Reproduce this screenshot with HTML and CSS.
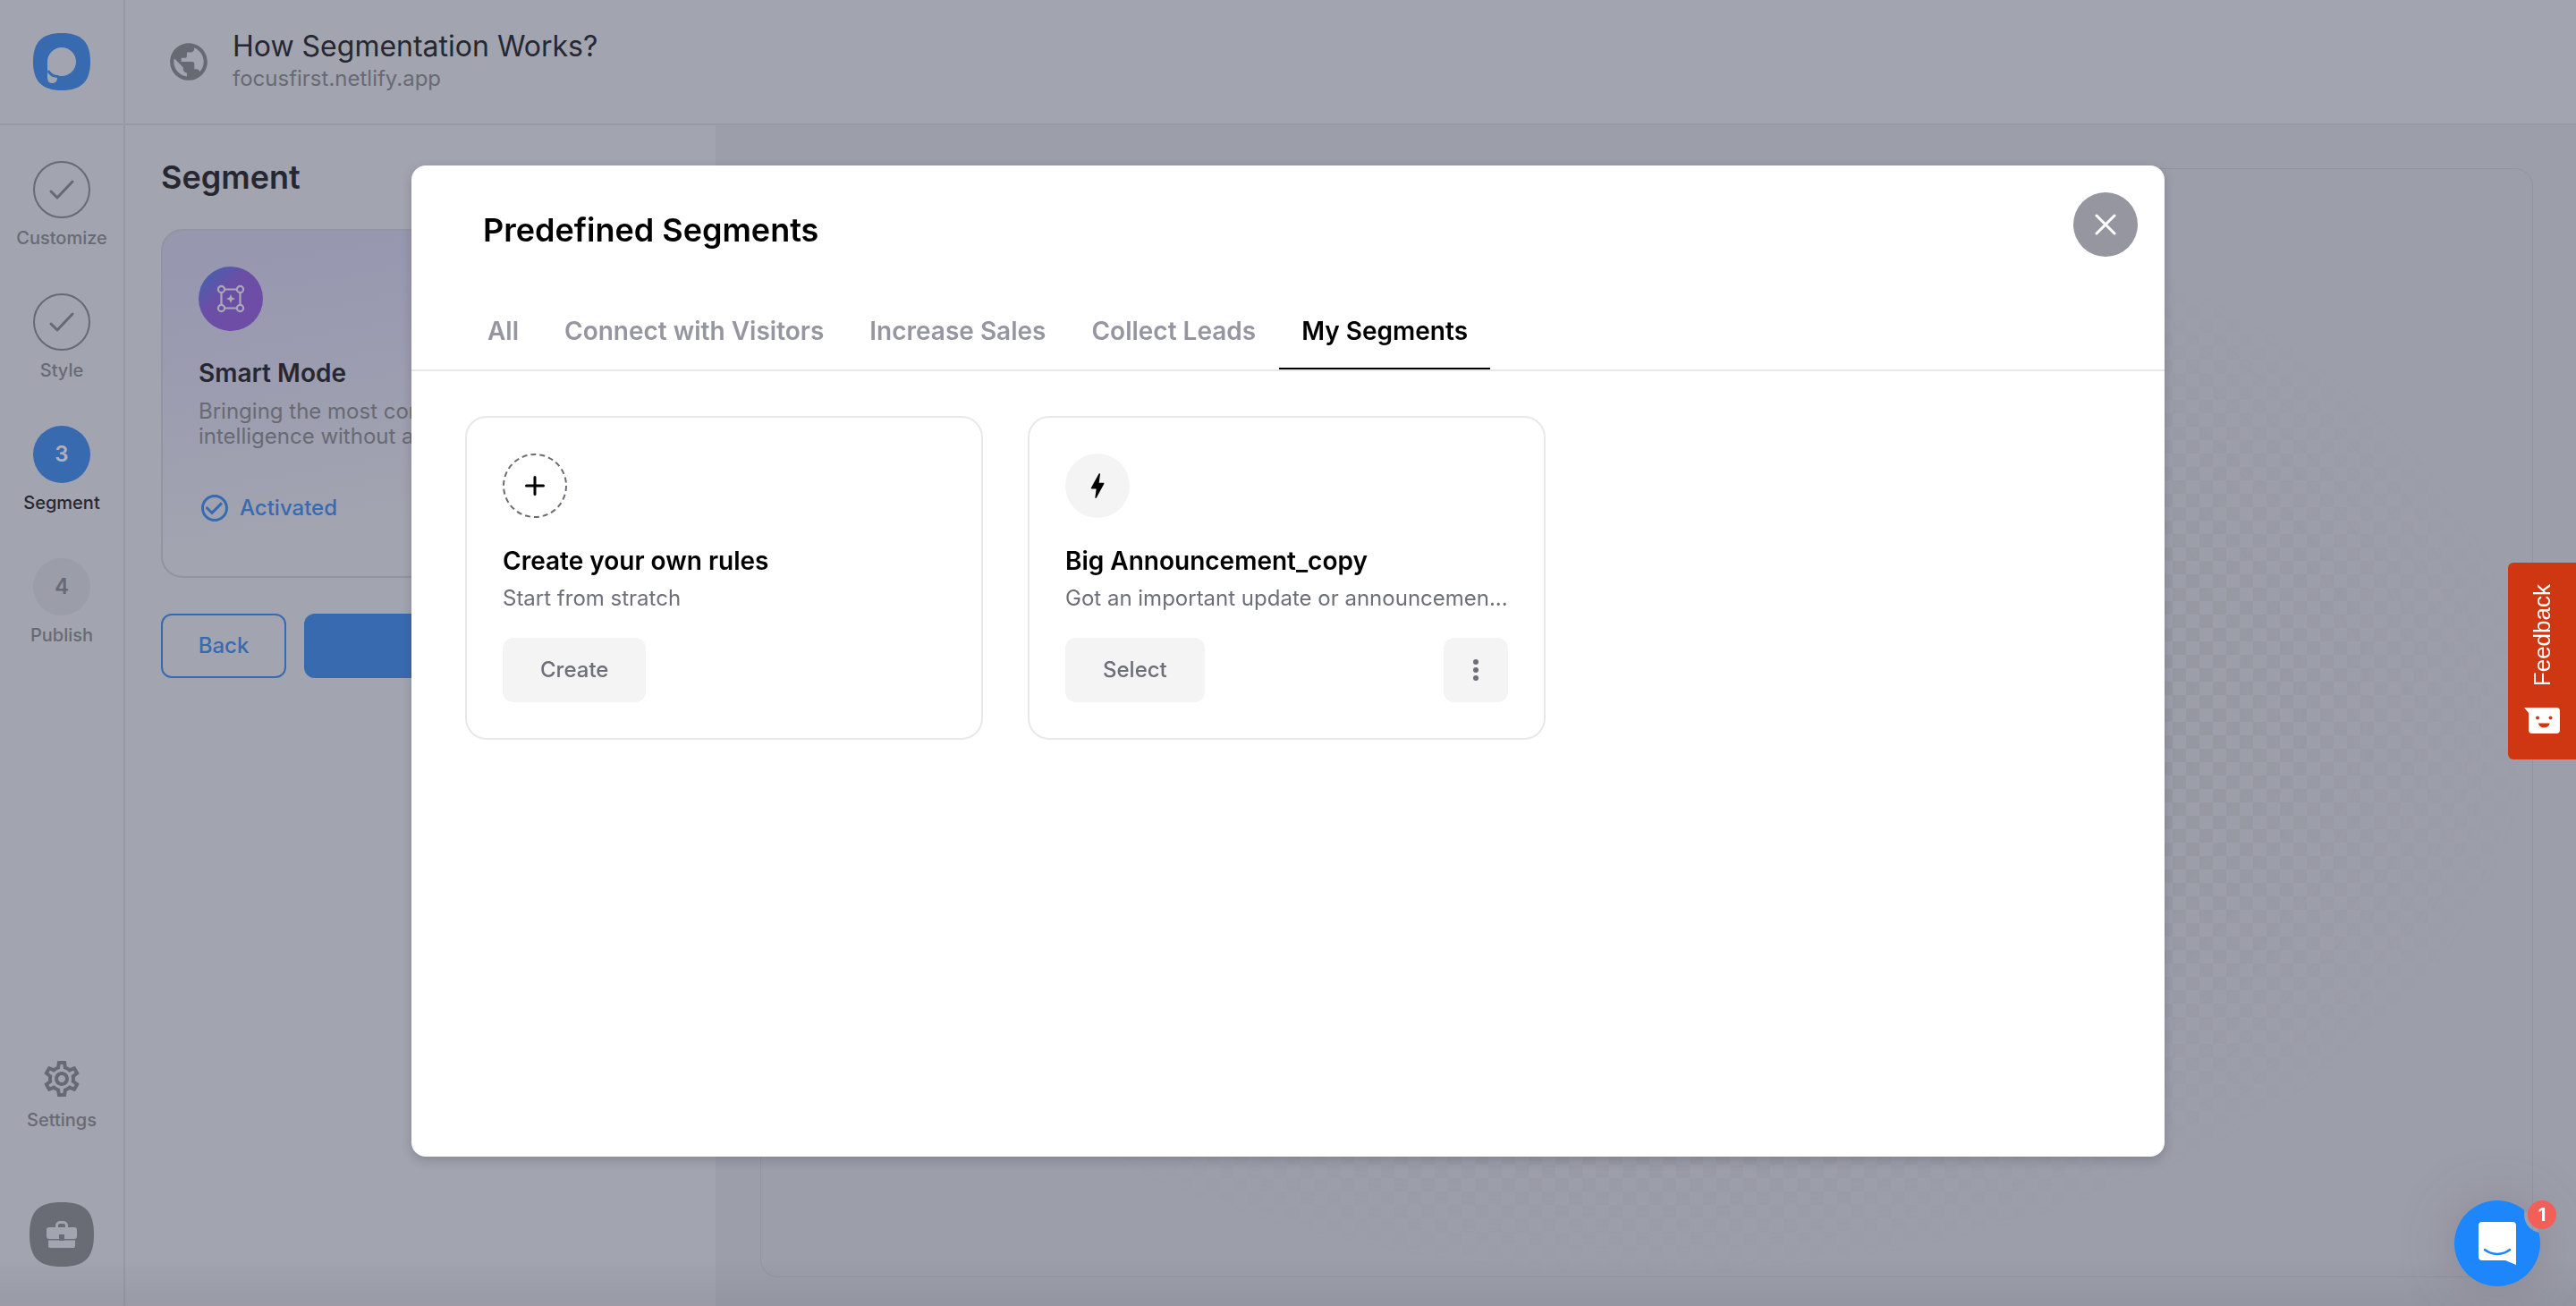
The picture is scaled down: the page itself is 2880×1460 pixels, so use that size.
FILE: index.html
```html
<!DOCTYPE html>
<html lang="en">
<head>
<meta charset="utf-8">
<meta name="viewport" content="width=device-width, initial-scale=1">
<title>Predefined Segments</title>
<link rel="stylesheet" href="styles.css">
</head>
<body>
<div class="app">
  <aside class="sidebar">
    <a class="logo" href="#" aria-label="Home">
      <svg width="64" height="64" viewBox="0 0 64 64" aria-hidden="true">
        <path class="logo-shape" d="M32 0C54 0 64 10 64 32S54 64 32 64 0 54 0 32 10 0 32 0z"/>
        <path class="logo-hole" d="M16 32a16 16 0 1 1 16 16c-2 0-4 0-5.500-1 1 3 1 9-5 9-4 0-5.500-3-5.500-6z"/>
        <path class="logo-stroke" d="M17.500 43c2 3.500 5 5.500 10 5.500"/>
      </svg>
    </a>
    <nav class="rail" aria-label="Steps">
      <ol class="steps">
        <li><a class="step" href="#"><span class="step-mark done"><svg width="60" height="60" viewBox="2 2 60 60" aria-hidden="true"><path d="M20 34l7 7 17-18"/></svg></span>Customize</a></li>
        <li><a class="step" href="#"><span class="step-mark done"><svg width="60" height="60" viewBox="2 2 60 60" aria-hidden="true"><path d="M20 34l7 7 17-18"/></svg></span>Style</a></li>
        <li><a class="step active" href="#" aria-current="step"><span class="step-mark current">3</span>Segment</a></li>
        <li><a class="step" href="#"><span class="step-mark next">4</span>Publish</a></li>
      </ol>
      <div class="rail-end">
        <a class="step" href="#">
          <svg width="48" height="48" viewBox="0 0 24 24" fill="currentColor" aria-hidden="true"><path d="M19.43 12.98c.04-.32.07-.64.07-.98 0-.34-.03-.66-.07-.98l2.110-1.650c.19-.15.24-.42.12-.64l-2-3.460c-.09-.16-.26-.25-.44-.25-.06 0-.12.01-.17.03l-2.490 1c-.52-.4-1.080-.73-1.690-.98l-.38-2.650C14.460 2.180 14.250 2 14 2h-4c-.25 0-.46.18-.49.42l-.38 2.650c-.61.25-1.170.59-1.690.98l-2.490-1c-.06-.02-.12-.03-.18-.03-.17 0-.34.09-.43.25l-2 3.460c-.13.22-.07.49.12.64l2.110 1.650c-.04.32-.07.65-.07.98 0 .33.03.66.07.98l-2.110 1.650c-.19.15-.24.42-.12.64l2 3.460c.09.16.26.25.44.25.06 0 .12-.01.17-.03l2.490-1c.52.4 1.080.73 1.690.98l.38 2.650c.03.24.24.42.49.42h4c.25 0 .46-.18.49-.42l.38-2.650c.61-.25 1.170-.59 1.690-.98l2.490 1c.06.02.12.03.18.03.17 0 .34-.09.43-.25l2-3.460c.12-.22.07-.49-.12-.64l-2.110-1.650zm-1.980-1.710c.04.31.05.52.05.73 0 .21-.02.43-.05.73l-.14 1.130.89.7 1.080.84-.7 1.210-1.270-.51-1.040-.42-.9.68c-.43.32-.84.56-1.250.73l-1.060.43-.16 1.130-.2 1.350h-1.400l-.19-1.350-.16-1.130-1.060-.43c-.43-.18-.83-.41-1.230-.71l-.91-.7-1.060.43-1.270.51-.7-1.210 1.080-.84.89-.7-.14-1.130c-.03-.31-.05-.54-.05-.74s.02-.43.05-.73l.14-1.130-.89-.7-1.080-.84.7-1.210 1.270.51 1.040.42.9-.68c.43-.32.84-.56 1.250-.73l1.060-.43.16-1.130.2-1.350h1.390l.19 1.350.16 1.130 1.060.43c.43.18.83.41 1.230.71l.91.7 1.060-.43 1.270-.51.7 1.210-1.070.85-.89.7.14 1.130zM12 8c-2.210 0-4 1.790-4 4s1.790 4 4 4 4-1.790 4-4-1.790-4-4-4zm0 6c-1.100 0-2-.9-2-2s.9-2 2-2 2 .9 2 2-.9 2-2 2z"/></svg>
          Settings
        </a>
        <button class="workspace" type="button" aria-label="Workspace">
          <svg width="72" height="72" viewBox="0 0 72 72" aria-hidden="true">
            <path class="case-bg" d="M36 0C62 0 72 10 72 36S62 72 36 72 0 62 0 36 10 0 36 0z"/>
            <path class="case-handle" d="M30.500 29v-3a3.500 3.500 0 0 1 3.500-3.500h4a3.500 3.500 0 0 1 3.500 3.500v3"/>
            <path class="case-body" d="M22 28h28a3 3 0 0 1 3 3v7a3 3 0 0 1-3 3H22a3 3 0 0 1-3-3v-7a3 3 0 0 1 3-3zM21 42.500h30V49a2 2 0 0 1-2 2H23a2 2 0 0 1-2-2z"/>
            <path class="case-bg" d="M33 36h6v7h-6z"/>
          </svg>
        </button>
      </div>
    </nav>
  </aside>

  <header class="topbar">
    <svg width="50" height="50" viewBox="0 0 24 24" fill="currentColor" aria-hidden="true"><path d="M12 2C6.480 2 2 6.480 2 12s4.480 10 10 10 10-4.480 10-10S17.520 2 12 2zm-1 17.930c-3.950-.49-7-3.850-7-7.930 0-.62.08-1.210.21-1.790L9 15v1c0 1.100.9 2 2 2v1.930zm6.900-2.540c-.26-.81-1-1.390-1.900-1.390h-1v-3c0-.55-.45-1-1-1H8v-2h2c.55 0 1-.45 1-1V7h2c1.100 0 2-.9 2-2v-.41c2.930 1.190 5 4.060 5 7.410 0 2.080-.8 3.970-2.100 5.390z"/></svg>
    <div class="heading">
      <p class="campaign">How Segmentation Works?</p>
      <p class="domain">focusfirst.netlify.app</p>
    </div>
  </header>

  <main class="work">
    <section class="panel">
      <h1 class="panel-title">Segment</h1>
      <article class="smart">
        <svg class="smart-icon" width="72" height="72" viewBox="0 0 72 72" aria-hidden="true">
          <defs><linearGradient id="smart-fill" x1="0" y1="0" x2="1" y2="1"><stop offset="0" stop-color="#3d66b0"/><stop offset=".4" stop-color="#6a4ea6"/><stop offset="1" stop-color="#704ca6"/></linearGradient></defs>
          <circle cx="36" cy="36" r="36" fill="url(#smart-fill)"/>
          <g fill="none" stroke="#a9a9b6" stroke-width="2.200"><circle cx="25.500" cy="25.500" r="3.600"/><circle cx="46.500" cy="25.500" r="3.600"/><circle cx="25.500" cy="46.500" r="3.600"/><circle cx="46.500" cy="46.500" r="3.600"/><path d="M29 25.500h14M29 46.500h14M25.500 29v14M46.500 29v14"/></g>
          <path d="M36 31l1.500 3.500L41 36l-3.500 1.500L36 41l-1.500-3.500L31 36l3.500-1.500z" fill="#a9a9b6"/>
        </svg>
        <h2 class="smart-title">Smart Mode</h2>
        <p class="smart-text">Bringing the most conversions with artificial<br>intelligence without any effort</p>
        <p class="activated">
          <svg width="36" height="36" viewBox="0 0 24 24" fill="currentColor" aria-hidden="true"><path d="M16.590 7.580L10 14.170l-3.590-3.580L5 12l5 5 8-8zM12 2C6.480 2 2 6.480 2 12s4.480 10 10 10 10-4.480 10-10S17.520 2 12 2zm0 18c-4.420 0-8-3.580-8-8s3.580-8 8-8 8 3.580 8 8-3.580 8-8 8z"/></svg>
          Activated
        </p>
      </article>
      <div class="panel-actions">
        <button class="back" type="button">Back</button>
        <button class="continue" type="button" aria-label="Continue"></button>
      </div>
    </section>
    <section class="canvas" aria-label="Preview"><div class="frame"><div class="checker"></div></div></section>
  </main>
</div>

<div class="overlay">
  <div class="modal" role="dialog" aria-modal="true" aria-labelledby="modal-title">
    <header class="modal-head">
      <h2 class="modal-title" id="modal-title">Predefined Segments</h2>
      <button class="close" type="button" aria-label="Close"><svg width="24" height="24" viewBox="0 0 24 24" aria-hidden="true"><path d="M2 2l20 20M22 2L2 22"/></svg></button>
    </header>
    <div class="tabs" role="tablist">
      <button class="tab" type="button" role="tab">All</button>
      <button class="tab" type="button" role="tab">Connect with Visitors</button>
      <button class="tab" type="button" role="tab">Increase Sales</button>
      <button class="tab" type="button" role="tab">Collect Leads</button>
      <button class="tab selected" type="button" role="tab" aria-selected="true">My Segments</button>
    </div>
    <div class="cards">
      <article class="card">
        <svg width="72" height="72" viewBox="0 0 72 72" aria-hidden="true"><circle class="dashed" cx="36" cy="36" r="35"/><path class="plus" d="M36 26.500v19M26.500 36h19"/></svg>
        <h3 class="card-title">Create your own rules</h3>
        <p class="card-text">Start from stratch</p>
        <div class="card-actions"><button class="soft" type="button">Create</button></div>
      </article>
      <article class="card">
        <svg width="72" height="72" viewBox="0 0 72 72" aria-hidden="true"><circle cx="36" cy="36" r="36" fill="#f4f4f5"/><path d="M37.600 22.600c.5-.8 1.500-.5 1.400.4l-1.300 9.800h4.800c.8 0 1.100.5.8 1.200l-8.500 15.500c-.5.800-1.500.5-1.400-.4l1.300-9.600h-5c-.8 0-1.100-.6-.8-1.200z" fill="#000"/></svg>
        <h3 class="card-title">Big Announcement_copy</h3>
        <p class="card-text">Got an important update or announcemen...</p>
        <div class="card-actions">
          <button class="soft" type="button">Select</button>
          <button class="more" type="button" aria-label="More"><svg width="24" height="24" viewBox="0 0 24 24" fill="currentColor" aria-hidden="true"><circle cx="12" cy="3" r="3"/><circle cx="12" cy="12" r="3"/><circle cx="12" cy="21" r="3"/></svg></button>
        </div>
      </article>
    </div>
  </div>
</div>

<button class="feedback" type="button">
  <span class="feedback-text">Feedback</span>
  <svg width="40" height="30" viewBox="0 0 40 30" aria-hidden="true"><path d="M0 0h36a4 4 0 0 1 4 4v21a4 4 0 0 1-4 4H9a4 4 0 0 1-4-4V6z" fill="#fff"/><circle cx="15" cy="11.500" r="2"/><circle cx="29.500" cy="11.500" r="2"/><path d="M16 17.500h12.500c-.8 6.500-11.700 6.500-12.500 0z"/></svg>
</button>

<button class="chat" type="button" aria-label="Open chat, 1 unread">
  <svg width="96" height="96" viewBox="0 0 96 96" aria-hidden="true">
    <defs><mask id="notch"><path d="M0 0h96v96H0z" fill="#fff"/><circle cx="98" cy="16" r="20" fill="#000"/></mask></defs>
    <circle cx="48" cy="48" r="48" fill="#1d86fa" mask="url(#notch)"/>
    <path d="M31 24h34a4 4 0 0 1 4 4v44l-12-5H31a4 4 0 0 1-4-4V28a4 4 0 0 1 4-4z" fill="#fff"/>
    <path d="M34 55c8 6.500 20 6.500 28 0" fill="none" stroke="#1d86fa" stroke-width="2.500" stroke-linecap="round"/>
  </svg>
  <span class="count">1</span>
</button>
</body>
</html>
```
FILE: styles.css
```css
* { box-sizing: border-box; }

:root {
  --surface: #a2a4b0;
  --surface-alt: #9c9eaa;
  --line: #9799a4;
  --muted: #686a73;
  --ink: #272731;
  --brand: #386ab0;
}

body {
  margin: 0;
  background: var(--surface);
  color: var(--ink);
  font-family: Inter, "Liberation Sans", sans-serif;
  font-size: 24px;
  line-height: 28px;
}

h1, h2, h3, p, ol { margin: 0; padding: 0; }
ol { list-style: none; }
a { color: inherit; text-decoration: none; }
svg { display: block; flex: none; }
button { border: 0; padding: 0; background: none; color: inherit; font: inherit; cursor: pointer; }

/* Page behind the dialog */
.app {
  display: grid;
  grid-template-columns: 140px 1fr;
  grid-template-rows: 140px 1fr;
  min-height: 100vh;
}

.sidebar {
  grid-row: 1 / 3;
  display: flex;
  flex-direction: column;
  border-right: 2px solid var(--line);
}

.logo {
  display: flex;
  align-items: center;
  justify-content: center;
  height: 140px;
  border-bottom: 2px solid var(--line);
}
.logo-shape { fill: var(--brand); }
.logo-hole { fill: var(--surface); }
.logo-stroke { fill: none; stroke: var(--brand); stroke-width: 3; stroke-linecap: round; }

.rail {
  flex: 1;
  display: flex;
  flex-direction: column;
  justify-content: space-between;
  padding: 40px 0 44px;
}
.steps { display: grid; gap: 50px; }
.step {
  display: flex;
  flex-direction: column;
  align-items: center;
  gap: 10px;
  color: var(--muted);
  font-size: 20px;
  font-weight: 500;
  line-height: 24px;
}
.step.active { color: var(--ink); }
.step-mark {
  display: grid;
  place-items: center;
  width: 64px;
  height: 64px;
  border-radius: 50%;
  font-size: 24px;
  font-weight: 600;
}
.step-mark.done { border: 2px solid var(--muted); }
.step-mark path { fill: none; stroke: var(--muted); stroke-width: 3; stroke-linecap: round; stroke-linejoin: round; }
.step-mark.current { background: var(--brand); color: #b0b1bd; }
.step-mark.next { background: #9b9da9; }
.rail-end { display: flex; flex-direction: column; align-items: center; gap: 80px; }
.case-bg { fill: #6a6c75; }
.case-body { fill: var(--surface); }
.case-handle { fill: none; stroke: var(--surface); stroke-width: 3; }

.topbar {
  display: flex;
  align-items: center;
  gap: 24px;
  padding: 0 46px;
  border-bottom: 2px solid var(--line);
  color: var(--muted);
}
.heading { padding-top: 2px; }
.campaign { color: var(--ink); font-size: 32px; line-height: 36px; }
.domain { line-height: 36px; }

.work { display: grid; grid-template-columns: 660px 1fr; }
.panel { padding: 36px 40px; }
.panel-title { margin-bottom: 36px; font-size: 36px; font-weight: 600; line-height: 44px; }
.smart {
  padding: 40px;
  border: 2px solid #92949f;
  border-radius: 24px;
  background: linear-gradient(170deg, #9798b0 10%, #9b9cb0 35%, var(--surface) 75%);
}
.smart-title { margin: 30px 0 12px; font-size: 28px; font-weight: 600; line-height: 34px; }
.smart-text { color: var(--muted); white-space: nowrap; }
.activated {
  display: flex;
  align-items: center;
  gap: 10px;
  height: 72px;
  margin-top: 30px;
  color: var(--brand);
  font-weight: 500;
}
.panel-actions { display: flex; gap: 20px; margin-top: 40px; }
.back {
  width: 140px;
  height: 72px;
  border: 2px solid var(--brand);
  border-radius: 12px;
  color: var(--brand);
  font-weight: 500;
}
.continue { flex: 1; border-radius: 12px; background: var(--brand); }

.canvas { display: grid; padding: 48px 48px 32px 50px; background: var(--surface-alt); }
.frame { display: grid; border: 1px solid #92949f; border-radius: 20px; }
.checker {
  background: repeating-conic-gradient(transparent 0 25%, #8d8f94 0 50%) 3px 3px / 30px 30px;
  -webkit-mask-image: radial-gradient(closest-side, #000, transparent);
  mask-image: radial-gradient(closest-side, #000, transparent);
}

/* Dialog */
.overlay {
  position: fixed;
  inset: 0;
  display: flex;
  align-items: flex-start;
  justify-content: center;
  padding: 185px 40px 40px;
  background: linear-gradient(to top, rgba(115, 115, 125, .2), transparent 50px);
}
.modal {
  width: 100%;
  max-width: 1960px;
  min-height: calc(100vh - 352px);
  border-radius: 16px;
  background: #fff;
  color: #000;
  box-shadow: 0 4px 12px rgba(40, 40, 60, .22);
}
.modal-head {
  display: flex;
  align-items: center;
  justify-content: space-between;
  height: 142px;
  padding: 0 30px 0 80px;
}
.modal-title { padding-top: 2px; font-size: 36px; font-weight: 600; line-height: 44px; }
.close {
  display: grid;
  place-items: center;
  align-self: flex-start;
  width: 72px;
  height: 72px;
  margin-top: 30px;
  border-radius: 50%;
  background: #9696a0;
}
.close path { stroke: #fff; stroke-width: 3; stroke-linecap: round; }

.tabs { display: flex; gap: 1px; padding: 0 60px; border-bottom: 2px solid #e8e8e9; }
.tab {
  height: 86px;
  padding: 2px 25px 0;
  border-bottom: 2px solid transparent;
  color: #9696a0;
  font-size: 28px;
  font-weight: 600;
}
.tab.selected { border-color: #000; color: #000; }

.cards { display: grid; grid-template-columns: repeat(3, minmax(0, 1fr)); gap: 50px; padding: 50px 63px 50px 60px; }
.card { padding: 40px; border: 2px solid #e8e8e9; border-radius: 24px; }
.dashed { fill: none; stroke: #6b6b76; stroke-width: 2; stroke-dasharray: 6 4; }
.plus { stroke: #000; stroke-width: 3; stroke-linecap: round; }
.card-title { margin: 30px 0 8px; font-size: 28px; font-weight: 600; line-height: 36px; }
.card-text { color: #6e6e79; line-height: 32px; white-space: nowrap; }
.card-actions { display: flex; justify-content: space-between; margin-top: 28px; }
.soft, .more {
  height: 72px;
  border-radius: 12px;
  background: #f4f4f5;
  color: #6e6e79;
  font-weight: 500;
}
.soft { padding: 0 42px; }
.more { display: grid; place-items: center; width: 72px; }

/* Widgets docked to the window edge */
.feedback {
  position: fixed;
  top: 629px;
  right: 0;
  display: flex;
  flex-direction: column;
  align-items: center;
  gap: 24px;
  width: 76px;
  padding: 24px 0 28px;
  border-radius: 6px 0 0 6px;
  background: #cf3713;
  color: #fff;
}
.feedback circle, .feedback path + circle ~ path { fill: #cf3713; }
.feedback-text {
  font-family: "Liberation Sans", Arial, sans-serif;
  font-size: 26px;
  line-height: 32px;
  writing-mode: vertical-rl;
  transform: rotate(180deg);
}
.chat {
  position: fixed;
  right: 40px;
  bottom: 22px;
  width: 96px;
  height: 96px;
  border-radius: 50%;
  box-shadow: 0 2px 60px rgba(110, 100, 105, .35);
}
.count {
  position: absolute;
  top: 0;
  right: -18px;
  width: 32px;
  height: 32px;
  border-radius: 50%;
  background: #f35e58;
  color: #fff;
  font-size: 20px;
  font-weight: 700;
  line-height: 32px;
  text-align: center;
}
```
